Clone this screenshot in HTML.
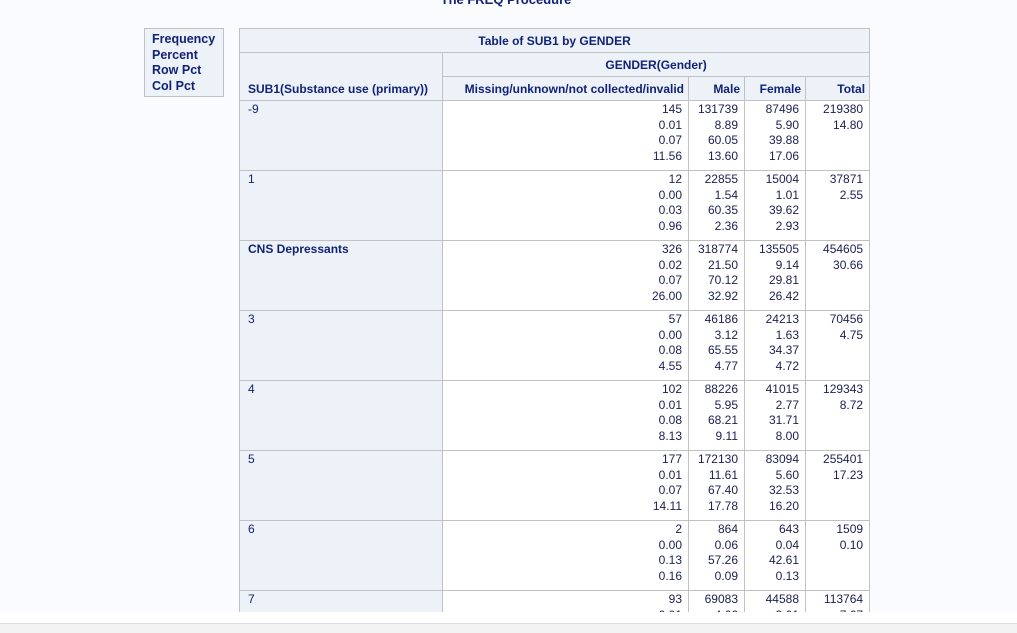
<!DOCTYPE html>
<html><head><style>
body{margin:0;width:1017px;height:632px;background:#fafbfe;font-family:"Liberation Sans",Arial,sans-serif;color:#112277;font-size:12px;overflow:hidden;position:relative}
.title{position:absolute;top:-8px;left:0;width:1012px;text-align:center;font-size:13px;font-weight:bold;color:#112277}
.legend{position:absolute;left:144px;top:28px;width:67px;padding:3px 4px 2px 7px;border:1px solid #c1c1c1;background:#edf2f9;font-weight:bold;line-height:15.5px;font-size:12.5px}
.wrap{position:absolute;left:239px;top:28px;height:584px;overflow:hidden}
table{border-collapse:collapse;background:#fff;table-layout:fixed;width:631px}
td,th{border:1px solid #c1c1c1;padding:0 4px;font-size:12px}
th{background:#edf2f9;font-weight:bold;height:23px}
.rh{background:#edf2f9;font-weight:normal;vertical-align:top;padding:1px 8px;height:67px;text-align:left}
.b{font-weight:bold}
.n{text-align:right;vertical-align:top;line-height:15.7px;padding:1px 6px 2px 4px;color:#1a1f50}
.bot{position:absolute;left:0;top:612px;width:1017px;height:20px;background:#fff}
.bot2{position:absolute;left:0;top:623px;width:1017px;height:9px;background:#f3f3f3;border-top:1px solid #dcdcdc}
</style></head><body>
<div class="title">The FREQ Procedure</div>
<div class="legend">Frequency<br>Percent<br>Row Pct<br>Col Pct</div>
<div class="wrap"><table>
<colgroup><col style="width:203px"><col style="width:246px"><col style="width:56px"><col style="width:61px"><col style="width:64px"></colgroup>
<tr><th colspan="5">Table of SUB1 by GENDER</th></tr>
<tr><th rowspan="2" style="vertical-align:bottom;text-align:left;padding:0 4px 4px 8px">SUB1(Substance use (primary))</th><th colspan="4">GENDER(Gender)</th></tr>
<tr><th style="text-align:right">Missing/unknown/not collected/invalid</th><th style="text-align:right">Male</th><th style="text-align:right">Female</th><th style="text-align:right">Total</th></tr>
<tr><td class="rh">-9</td><td class="n">145<br>0.01<br>0.07<br>11.56</td><td class="n">131739<br>8.89<br>60.05<br>13.60</td><td class="n">87496<br>5.90<br>39.88<br>17.06</td><td class="n">219380<br>14.80</td></tr>
<tr><td class="rh">1</td><td class="n">12<br>0.00<br>0.03<br>0.96</td><td class="n">22855<br>1.54<br>60.35<br>2.36</td><td class="n">15004<br>1.01<br>39.62<br>2.93</td><td class="n">37871<br>2.55</td></tr>
<tr><td class="rh b">CNS Depressants</td><td class="n">326<br>0.02<br>0.07<br>26.00</td><td class="n">318774<br>21.50<br>70.12<br>32.92</td><td class="n">135505<br>9.14<br>29.81<br>26.42</td><td class="n">454605<br>30.66</td></tr>
<tr><td class="rh">3</td><td class="n">57<br>0.00<br>0.08<br>4.55</td><td class="n">46186<br>3.12<br>65.55<br>4.77</td><td class="n">24213<br>1.63<br>34.37<br>4.72</td><td class="n">70456<br>4.75</td></tr>
<tr><td class="rh">4</td><td class="n">102<br>0.01<br>0.08<br>8.13</td><td class="n">88226<br>5.95<br>68.21<br>9.11</td><td class="n">41015<br>2.77<br>31.71<br>8.00</td><td class="n">129343<br>8.72</td></tr>
<tr><td class="rh">5</td><td class="n">177<br>0.01<br>0.07<br>14.11</td><td class="n">172130<br>11.61<br>67.40<br>17.78</td><td class="n">83094<br>5.60<br>32.53<br>16.20</td><td class="n">255401<br>17.23</td></tr>
<tr><td class="rh">6</td><td class="n">2<br>0.00<br>0.13<br>0.16</td><td class="n">864<br>0.06<br>57.26<br>0.09</td><td class="n">643<br>0.04<br>42.61<br>0.13</td><td class="n">1509<br>0.10</td></tr>
<tr><td class="rh">7</td><td class="n">93<br>0.01<br>0.08<br>7.42</td><td class="n">69083<br>4.66<br>60.73<br>7.13</td><td class="n">44588<br>3.01<br>39.20<br>8.69</td><td class="n">113764<br>7.67</td></tr>
</table></div>
<div class="bot"></div><div class="bot2"></div>
</body></html>
